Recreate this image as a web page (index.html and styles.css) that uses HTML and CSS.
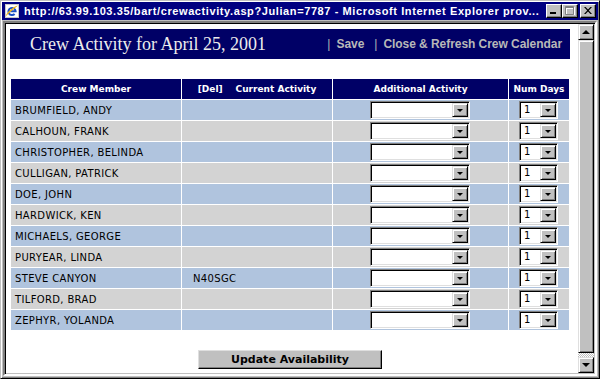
FILE: index.html
```html
<!DOCTYPE html>
<html>
<head>
<meta charset="utf-8">
<title>Crew Activity</title>
<link rel="stylesheet" href="styles.css">
</head>
<body>
<div class="window">
  <div class="titlebar">
    <svg class="ie-icon" width="16" height="16" viewBox="0 0 16 16">
      <rect x="1.5" y="1.5" width="13" height="13" fill="#fff" stroke="#c8c8c8"/>
      <path d="M4.5 8.2 H11.6 A3.6 3.6 0 1 0 10.6 11" fill="none" stroke="#1a4fc4" stroke-width="2"/>
      <path d="M1.5 13.5 C3 9 9 3.5 14 2.5 C11 5 6 9 1.5 13.5 Z" fill="#f2b418"/>
    </svg>
    <span class="title-text">http://63.99.103.35/bart/crewactivity.asp?Julian=7787 - Microsoft Internet Explorer prov...</span>
    <div class="caption-buttons">
      <span class="cap-btn">
        <svg width="8" height="7" viewBox="0 0 8 7"><rect x="0" y="5" width="6" height="2" fill="#000"/></svg>
      </span>
      <span class="cap-btn">
        <svg width="10" height="9" viewBox="0 0 10 9"><path d="M1.5 1.5 H9.5 V9.5 H1.5 Z M1.5 2.5 H9.5" fill="none" stroke="#fff"/><path d="M0.5 0.5 H8.5 V8.5 H0.5 Z M0.5 1.5 H8.5" fill="none" stroke="#808080"/></svg>
      </span>
      <span class="cap-btn close-btn">
        <svg width="8" height="7" viewBox="0 0 8 7"><path d="M0 0 L1.6 0 L4 2.6 L6.4 0 L8 0 L4.8 3.5 L8 7 L6.4 7 L4 4.4 L1.6 7 L0 7 L3.2 3.5 Z" fill="#000"/></svg>
      </span>
    </div>
  </div>
  <div class="client">
    <div class="page">
      <div class="page-header">
        <h1 class="page-title">Crew Activity for April 25, 2001</h1>
        <div class="header-links">
          <span class="pipe">|</span><span class="hlink">Save</span><span class="pipe">|</span><span class="hlink">Close &amp; Refresh Crew Calendar</span>
        </div>
      </div>
      <table class="crew">
        <colgroup>
          <col class="c1"><col class="c2"><col class="c3"><col class="c4">
        </colgroup>
        <thead>
          <tr>
            <th>Crew Member</th>
            <th><span class="del">[Del]</span>Current Activity</th>
            <th>Additional Activity</th>
            <th>Num Days</th>
          </tr>
        </thead>
        <tbody>
          <tr class="blue"><td class="name">BRUMFIELD, ANDY</td><td class="cur"></td><td class="sel"><span class="select wide"><span class="val"></span><span class="arrow"></span></span></td><td class="sel"><span class="select small"><span class="val">1</span><span class="arrow"></span></span></td></tr>
          <tr class="gray"><td class="name">CALHOUN, FRANK</td><td class="cur"></td><td class="sel"><span class="select wide"><span class="val"></span><span class="arrow"></span></span></td><td class="sel"><span class="select small"><span class="val">1</span><span class="arrow"></span></span></td></tr>
          <tr class="blue"><td class="name">CHRISTOPHER, BELINDA</td><td class="cur"></td><td class="sel"><span class="select wide"><span class="val"></span><span class="arrow"></span></span></td><td class="sel"><span class="select small"><span class="val">1</span><span class="arrow"></span></span></td></tr>
          <tr class="gray"><td class="name">CULLIGAN, PATRICK</td><td class="cur"></td><td class="sel"><span class="select wide"><span class="val"></span><span class="arrow"></span></span></td><td class="sel"><span class="select small"><span class="val">1</span><span class="arrow"></span></span></td></tr>
          <tr class="blue"><td class="name">DOE, JOHN</td><td class="cur"></td><td class="sel"><span class="select wide"><span class="val"></span><span class="arrow"></span></span></td><td class="sel"><span class="select small"><span class="val">1</span><span class="arrow"></span></span></td></tr>
          <tr class="gray"><td class="name">HARDWICK, KEN</td><td class="cur"></td><td class="sel"><span class="select wide"><span class="val"></span><span class="arrow"></span></span></td><td class="sel"><span class="select small"><span class="val">1</span><span class="arrow"></span></span></td></tr>
          <tr class="blue"><td class="name">MICHAELS, GEORGE</td><td class="cur"></td><td class="sel"><span class="select wide"><span class="val"></span><span class="arrow"></span></span></td><td class="sel"><span class="select small"><span class="val">1</span><span class="arrow"></span></span></td></tr>
          <tr class="gray"><td class="name">PURYEAR, LINDA</td><td class="cur"></td><td class="sel"><span class="select wide"><span class="val"></span><span class="arrow"></span></span></td><td class="sel"><span class="select small"><span class="val">1</span><span class="arrow"></span></span></td></tr>
          <tr class="blue"><td class="name">STEVE CANYON</td><td class="cur">N40SGC</td><td class="sel"><span class="select wide"><span class="val"></span><span class="arrow"></span></span></td><td class="sel"><span class="select small"><span class="val">1</span><span class="arrow"></span></span></td></tr>
          <tr class="gray"><td class="name">TILFORD, BRAD</td><td class="cur"></td><td class="sel"><span class="select wide"><span class="val"></span><span class="arrow"></span></span></td><td class="sel"><span class="select small"><span class="val">1</span><span class="arrow"></span></span></td></tr>
          <tr class="blue"><td class="name">ZEPHYR, YOLANDA</td><td class="cur"></td><td class="sel"><span class="select wide"><span class="val"></span><span class="arrow"></span></span></td><td class="sel"><span class="select small"><span class="val">1</span><span class="arrow"></span></span></td></tr>
        </tbody>
      </table>
      <div class="actions">
        <button class="update-btn" type="button">Update Availability</button>
      </div>
    </div>
    <div class="scrollbar">
      <div class="sb-btn"><span class="tri-up"></span></div>
      <div class="sb-track"><div class="sb-thumb"></div></div>
      <div class="sb-btn"><span class="tri-down"></span></div>
    </div>
  </div>
</div>
</body>
</html>
```

FILE: styles.css
```css
html, body {
  margin: 0;
  padding: 0;
}

body {
  width: 600px;
  height: 379px;
  overflow: hidden;
  background: #c0c0c0;
}

.window {
  box-sizing: border-box;
  width: 600px;
  height: 379px;
  background: #c0c0c0;
  border: 1px solid;
  border-color: #c0c0c0 #000 #000 #c0c0c0;
  box-shadow: inset 1px 1px #fff, inset -1px -1px #808080;
  padding: 1px;
  display: flex;
  flex-direction: column;
}

.titlebar {
  height: 18px;
  background: #000080;
  display: flex;
  align-items: center;
  padding: 0 2px 0 2px;
  flex: none;
}

.ie-icon {
  flex: none;
  margin-right: 4px;
}

.title-text {
  flex: 1;
  color: #fff;
  font-family: "Liberation Sans", Arial, sans-serif;
  font-weight: bold;
  font-size: 11px;
  white-space: nowrap;
  overflow: hidden;
  letter-spacing: 0.6px;
}

.caption-buttons {
  display: flex;
  flex: none;
}

.cap-btn {
  box-sizing: border-box;
  width: 16px;
  height: 14px;
  background: #c0c0c0;
  border: 1px solid;
  border-color: #fff #000 #000 #fff;
  box-shadow: inset -1px -1px #808080;
  display: flex;
  align-items: center;
  justify-content: center;
  padding: 0 1px 1px 0;
}

.close-btn {
  margin-left: 2px;
}

.client {
  flex: 1;
  margin: 1px 1px 1px 1px;
  border: 2px solid;
  border-color: #808080 #fff #fff #808080;
  box-shadow: inset 1px 1px #000, inset -1px -1px #c0c0c0;
  display: flex;
  min-height: 0;
}

.page {
  flex: 1;
  background: #fff;
  padding: 5px 0 0 4px;
  margin: 1px 0 1px 1px;
  overflow: hidden;
}

.page-header {
  width: 560px;
  height: 30px;
  box-sizing: border-box;
  background: #000066;
  display: flex;
  align-items: center;
  justify-content: space-between;
  padding: 0 8px 0 20px;
}

.page-title {
  margin: 0;
  font-family: "Liberation Serif", "Times New Roman", serif;
  font-weight: normal;
  font-size: 18px;
  color: #ececec;
  white-space: nowrap;
}

.header-links {
  display: flex;
  align-items: center;
  font-family: "Liberation Sans", Arial, sans-serif;
  font-size: 12px;
  color: #b8b8b8;
  white-space: nowrap;
}

.pipe {
  font-weight: normal;
  margin: 0 6px 0 0;
}

.hlink {
  font-weight: bold;
  margin-right: 10px;
  letter-spacing: -0.05px;
}

.hlink:last-child {
  margin-right: 0;
}

.crew {
  margin-top: 19px;
  width: 560px;
  table-layout: fixed;
  border-collapse: separate;
  border-spacing: 1px;
  background: #fff;
  font-family: "DejaVu Sans", Verdana, sans-serif;
}

.c1 { width: 170px; }
.c2 { width: 150px; }
.c3 { width: 175px; }
.c4 { width: 60px; }

.crew th {
  height: 20px;
  padding: 0;
  background: #000066;
  color: #fff;
  font-size: 9px;
  font-weight: bold;
  text-align: center;
  vertical-align: middle;
  white-space: nowrap;
}

.del {
  margin-right: 13px;
}

.crew td {
  height: 20px;
  padding: 0;
  font-size: 10px;
  color: #000;
  vertical-align: middle;
  white-space: nowrap;
}

.crew tr.blue td { background: #b0c4de; }
.crew tr.gray td { background: #d3d3d3; }

.crew td.name {
  padding-left: 4px;
  letter-spacing: 0.35px;
}

.crew td.cur {
  padding-left: 11px;
  letter-spacing: 0.35px;
}

.crew td.sel {
  text-align: center;
}

.select {
  box-sizing: border-box;
  display: inline-flex;
  vertical-align: middle;
  height: 18px;
  background: #fff;
  border: 1px solid;
  border-color: #808080 #fff #fff #808080;
  box-shadow: inset 1px 1px #000, inset -1px -1px #dfdfdf;
  padding: 1px;
}

.select.wide { width: 100px; margin-left: -1px; }
.select.small { width: 39px; margin-left: -1px; }

.val {
  flex: 1;
  text-align: left;
  padding-left: 3px;
  font-size: 10px;
  line-height: 14px;
}

.arrow {
  box-sizing: border-box;
  width: 16px;
  height: 14px;
  background: #c0c0c0;
  border: 1px solid;
  border-color: #dfdfdf #000 #000 #dfdfdf;
  box-shadow: inset 1px 1px #fff, inset -1px -1px #808080;
  display: flex;
  align-items: center;
  justify-content: center;
}

.arrow::after {
  content: "";
  width: 0;
  height: 0;
  border-left: 3px solid transparent;
  border-right: 3px solid transparent;
  border-top: 3px solid #000;
  margin-top: 1px;
}

.actions {
  width: 560px;
  margin-top: 18px;
  text-align: center;
}

.update-btn {
  width: 184px;
  height: 19px;
  padding: 0;
  background: #c0c0c0;
  border: 1px solid;
  border-color: #dfdfdf #000 #000 #dfdfdf;
  box-shadow: inset -1px -1px #808080;
  font-family: "DejaVu Sans", Verdana, sans-serif;
  font-size: 11px;
  font-weight: bold;
  color: #000;
}

.scrollbar {
  width: 16px;
  flex: none;
  display: flex;
  flex-direction: column;
  margin: 1px 1px 1px 0;
}

.sb-btn {
  box-sizing: border-box;
  height: 16px;
  background: #c0c0c0;
  border: 1px solid;
  border-color: #dfdfdf #000 #000 #dfdfdf;
  box-shadow: inset 1px 1px #fff, inset -1px -1px #808080;
  display: flex;
  align-items: center;
  justify-content: center;
  flex: none;
}

.tri-up {
  width: 0;
  height: 0;
  border-left: 4px solid transparent;
  border-right: 4px solid transparent;
  border-bottom: 4px solid #000;
}

.tri-down {
  width: 0;
  height: 0;
  border-left: 4px solid transparent;
  border-right: 4px solid transparent;
  border-top: 4px solid #000;
}

.sb-track {
  flex: 1;
  display: flex;
  flex-direction: column;
  background: repeating-conic-gradient(#fff 0 25%, #c0c0c0 0 50%) 0 0 / 2px 2px;
  padding-bottom: 4px;
}

.sb-thumb {
  flex: 1;
  box-sizing: border-box;
  background: #c0c0c0;
  border: 1px solid;
  border-color: #dfdfdf #000 #000 #dfdfdf;
  box-shadow: inset 1px 1px #fff, inset -1px -1px #808080;
}
```
